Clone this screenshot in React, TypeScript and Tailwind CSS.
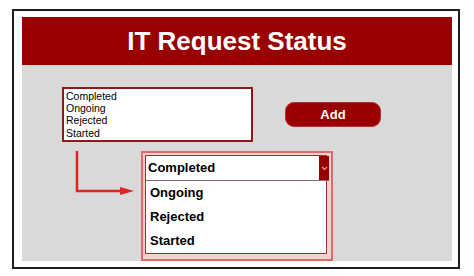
import React from "react";

export default function App() {
  const font = { fontFamily: '"Liberation Sans", Arial, sans-serif' };
  return (
    <div className="w-[474px] h-[276px] bg-white pl-[12px] pt-[9px]" style={font}>
      <div className="w-[448px] h-[260px] border-2 border-[#1e1e1e] pl-[8px] pr-[5px] pt-[6px] pb-[5px] bg-white">
        <div className="w-[430px] h-[244px] flex flex-col bg-[#d9d9d9]">
          <div className="h-[50px] bg-[#990000] flex items-center justify-center">
            <span className="text-white font-bold text-[26px] leading-none">IT Request Status</span>
          </div>
          <div className="flex flex-col pl-[40px] pt-[22px]">
            <div className="flex items-center gap-[32px]">
              <div className="w-[191px] h-[55px] border-2 border-[#8b1a1a] bg-white pl-[2px] pt-[1px] text-[10.5px] leading-[12.2px] text-black">
                <div>Completed</div>
                <div>Ongoing</div>
                <div>Rejected</div>
                <div>Started</div>
              </div>
              <div className="w-[96px] h-[25px] rounded-[9px] bg-[#990000] border border-[#b03030] flex items-center justify-center text-white font-bold text-[13px]">
                Add
              </div>
            </div>
            <div className="flex mt-[9px]">
              <svg width="79" height="48" viewBox="0 0 79 48" className="shrink-0">
                <path d="M15 0 V40 H62" fill="none" stroke="#e02424" strokeWidth="2.5" />
                <path d="M58 36 L72 40 L58 44 Z" fill="#e02424" />
              </svg>
              <div className="w-[192px] h-[110px] border-2 border-[#e06a6a] bg-[#f7d0d0] pt-[2px] pl-[2px] pr-[4px] pb-[5px]">
                <div className="h-full border border-[#9a3030] bg-white flex flex-col">
                  <div className="h-[26px] flex items-stretch border-b border-[#8a6a6a] -mr-[3px]">
                    <span className="flex-1 flex items-center pl-[2px] font-bold text-[13px] text-black">Completed</span>
                    <div className="w-[10px] bg-[#990000] flex items-center justify-center">
                      <svg width="7" height="5" viewBox="0 0 7 5">
                        <path d="M1 1 L3.5 3.5 L6 1" fill="none" stroke="#f2a0a0" strokeWidth="1.2" />
                      </svg>
                    </div>
                  </div>
                  <div className="flex flex-col pl-[4px] font-bold text-[13px] text-black">
                    <div className="h-[24px] flex items-center">Ongoing</div>
                    <div className="h-[24px] flex items-center">Rejected</div>
                    <div className="h-[24px] flex items-center">Started</div>
                  </div>
                </div>
              </div>
            </div>
          </div>
        </div>
      </div>
    </div>
  );
}
